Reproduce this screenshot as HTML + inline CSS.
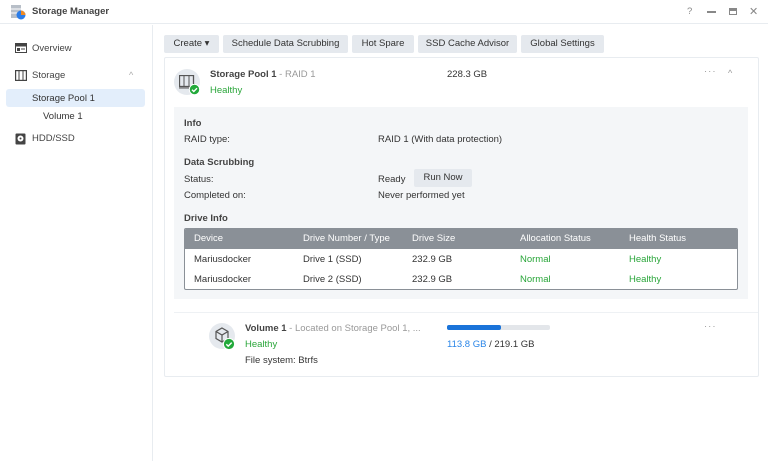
<!DOCTYPE html>
<html><head><style>
*{box-sizing:border-box;margin:0;padding:0}
body{width:768px;height:461px;overflow:hidden;background:#fff;font-family:"Liberation Sans",sans-serif;font-size:9.5px;color:#333;position:relative}
.a{position:absolute;white-space:nowrap}
.btn{position:absolute;top:35px;height:18px;background:#e5e9ee;border-radius:2px;line-height:18px;text-align:center;color:#333}
.g{color:#2aa63a}
.gr{color:#999}
</style></head><body>
<div class="a" style="left:0;top:0;width:768px;height:24px;border-bottom:1px solid #e8ecf0"></div>
<svg class="a" style="left:10px;top:4px" width="16" height="16"><rect x="1" y="1" width="10" height="13" fill="#b8bfc8"/><line x1="1" y1="5" x2="11" y2="5" stroke="#fff"/><line x1="1" y1="9" x2="11" y2="9" stroke="#fff"/><circle cx="11" cy="11" r="4.5" fill="#2b7de9"/><path d="M11 11V6.5A4.5 4.5 0 0 1 15.5 11Z" fill="#f08a24"/></svg>
<div class="a" style="left:32px;top:6px;font-weight:bold;color:#444">Storage Manager</div>
<div class="a" style="left:687px;top:6px;color:#888">?</div>
<div class="a" style="left:707px;top:11px;width:9px;height:1.5px;background:#888"></div>
<div class="a" style="left:729px;top:8px;width:8px;height:7px;border:1.5px solid #888;border-top-width:3px"></div>
<div class="a" style="left:749px;top:5px;color:#888;font-size:11px">✕</div>
<div class="a" style="left:152px;top:25px;width:1px;height:436px;background:#e8ecf0"></div>
<svg class="a" style="left:15px;top:43px" width="12" height="10"><rect x="0.5" y="0.5" width="11" height="9" fill="none" stroke="#444"/><rect x="0.5" y="0.5" width="11" height="3" fill="#444"/><rect x="2" y="5" width="3" height="3" fill="#444"/><line x1="6" y1="6" x2="10" y2="6" stroke="#444"/></svg>
<div class="a" style="left:32px;top:43px;color:#444">Overview</div>
<svg class="a" style="left:15px;top:70px" width="12" height="11"><rect x="0.5" y="0.5" width="11" height="10" fill="none" stroke="#444" stroke-width="1.4"/><line x1="4" y1="1" x2="4" y2="10" stroke="#444"/><line x1="8" y1="1" x2="8" y2="10" stroke="#444"/></svg>
<div class="a" style="left:32px;top:70px;color:#444">Storage</div>
<div class="a" style="left:129px;top:70px;color:#aaa;font-size:9px">^</div>
<div class="a" style="left:6px;top:89px;width:139px;height:18px;background:#e3eefb;border-radius:3px"></div>
<div class="a" style="left:32px;top:93px;color:#333">Storage Pool 1</div>
<div class="a" style="left:43px;top:111px;color:#333">Volume 1</div>
<svg class="a" style="left:15px;top:133px" width="11" height="12"><rect x="0.5" y="0.5" width="10" height="11" rx="1" fill="#444"/><circle cx="5.5" cy="5.5" r="3" fill="#fff"/><circle cx="5.5" cy="5.5" r="1" fill="#444"/></svg>
<div class="a" style="left:32px;top:133px;color:#444">HDD/SSD</div>
<div class="btn" style="left:164px;width:55px">Create ▾</div>
<div class="btn" style="left:223px;width:125px">Schedule Data Scrubbing</div>
<div class="btn" style="left:352px;width:62px">Hot Spare</div>
<div class="btn" style="left:418px;width:99px">SSD Cache Advisor</div>
<div class="btn" style="left:521px;width:83px">Global Settings</div>
<div class="a" style="left:164px;top:57px;width:595px;height:320px;border:1px solid #e8ecf0;border-radius:2px"></div>
<div class="a" style="left:174px;top:69px;width:26px;height:26px;border-radius:50%;background:#e5e9ee"></div>
<svg class="a" style="left:179px;top:75px" width="16" height="14"><rect x="0.5" y="0.5" width="14" height="11" fill="none" stroke="#555" stroke-width="1.3"/><line x1="5" y1="1" x2="5" y2="11" stroke="#555"/><line x1="10" y1="1" x2="10" y2="11" stroke="#555"/><line x1="0" y1="13" x2="15" y2="13" stroke="#555"/></svg>
<svg class="a" style="left:189px;top:84px" width="11" height="11"><circle cx="5.5" cy="5.5" r="5.2" fill="#22a93a" stroke="#fff"/><path d="M3 5.7l1.8 1.8L8 4.2" stroke="#fff" stroke-width="1.4" fill="none"/></svg>
<div class="a" style="left:210px;top:69px"><b style="color:#444">Storage Pool 1</b> <span class="gr">- RAID 1</span></div>
<div class="a g" style="left:210px;top:85px">Healthy</div>
<div class="a" style="left:447px;top:69px">228.3 GB</div>
<div class="a gr" style="left:704px;top:66px;letter-spacing:1px">···</div>
<div class="a gr" style="left:728px;top:68px;font-size:9px">^</div>
<div class="a" style="left:174px;top:107px;width:574px;height:192px;background:#f4f6f8"></div>
<div class="a" style="left:184px;top:118px;font-weight:bold;color:#444">Info</div>
<div class="a" style="left:184px;top:134px">RAID type:</div>
<div class="a" style="left:378px;top:134px">RAID 1 (With data protection)</div>
<div class="a" style="left:184px;top:157px;font-weight:bold;color:#444">Data Scrubbing</div>
<div class="a" style="left:184px;top:174px">Status:</div>
<div class="a" style="left:378px;top:174px">Ready</div>
<div class="a" style="left:414px;top:169px;width:58px;height:18px;background:#e5e9ee;border-radius:2px;text-align:center;line-height:18px">Run Now</div>
<div class="a" style="left:184px;top:190px">Completed on:</div>
<div class="a" style="left:378px;top:190px">Never performed yet</div>
<div class="a" style="left:184px;top:213px;font-weight:bold;color:#444">Drive Info</div>
<div class="a" style="left:184px;top:228px;width:554px;height:62px;border:1px solid #8a9097;border-radius:2px;background:#fff;overflow:hidden">
<div style="height:20px;background:#8a9097"></div></div>
<div class="a" style="left:194px;top:233px;color:#fff">Device</div>
<div class="a" style="left:303px;top:233px;color:#fff">Drive Number / Type</div>
<div class="a" style="left:412px;top:233px;color:#fff">Drive Size</div>
<div class="a" style="left:520px;top:233px;color:#fff">Allocation Status</div>
<div class="a" style="left:629px;top:233px;color:#fff">Health Status</div>
<div class="a" style="left:194px;top:254px">Mariusdocker</div>
<div class="a" style="left:303px;top:254px">Drive 1 (SSD)</div>
<div class="a" style="left:412px;top:254px">232.9 GB</div>
<div class="a g" style="left:520px;top:254px">Normal</div>
<div class="a g" style="left:629px;top:254px">Healthy</div>
<div class="a" style="left:194px;top:274px">Mariusdocker</div>
<div class="a" style="left:303px;top:274px">Drive 2 (SSD)</div>
<div class="a" style="left:412px;top:274px">232.9 GB</div>
<div class="a g" style="left:520px;top:274px">Normal</div>
<div class="a g" style="left:629px;top:274px">Healthy</div>
<div class="a" style="left:174px;top:312px;width:584px;height:1px;background:#eef1f4"></div>
<div class="a" style="left:209px;top:323px;width:26px;height:26px;border-radius:50%;background:#e5e9ee"></div>
<svg class="a" style="left:214px;top:327px" width="16" height="17"><path d="M8 1L14 4.5V11.5L8 15L2 11.5V4.5Z M2 4.5L8 8L14 4.5 M8 8V15" fill="none" stroke="#555" stroke-width="1.2"/></svg>
<svg class="a" style="left:223px;top:338px" width="12" height="12"><circle cx="6" cy="6" r="5.6" fill="#22a93a" stroke="#fff"/><path d="M3.3 6.2l1.9 1.9L8.7 4.6" stroke="#fff" stroke-width="1.4" fill="none"/></svg>
<div class="a" style="left:245px;top:323px"><b style="color:#444">Volume 1</b> <span class="gr">- Located on Storage Pool 1, ...</span></div>
<div class="a g" style="left:245px;top:339px">Healthy</div>
<div class="a" style="left:245px;top:355px">File system: Btrfs</div>
<div class="a" style="left:447px;top:325px;width:103px;height:5px;background:#e3e6ea;border-radius:2px"><div style="width:54px;height:5px;background:#1a73d9;border-radius:2px"></div></div>
<div class="a" style="left:447px;top:339px"><span style="color:#2b86e8">113.8 GB</span> / 219.1 GB</div>
<div class="a gr" style="left:704px;top:321px;letter-spacing:1px">···</div>
</body></html>
